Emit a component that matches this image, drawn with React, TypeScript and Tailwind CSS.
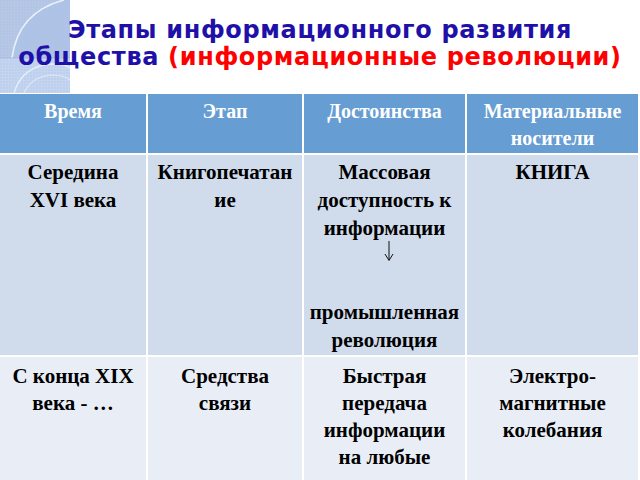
import React from "react";

const serif = { fontFamily: '"Liberation Serif", "Times New Roman", serif' };

function Logo() {
  return (
    <svg width="70" height="93" viewBox="0 0 70 93" className="absolute left-0 top-0">
      <defs>
        <pattern id="dots" width="3" height="3" patternUnits="userSpaceOnUse">
          <rect width="3" height="3" fill="#c4d5ef" />
          <circle cx="1" cy="1" r="0.7" fill="#b2c6e8" />
        </pattern>
        <pattern id="dots2" width="3" height="3" patternUnits="userSpaceOnUse">
          <rect width="3" height="3" fill="#b6c8e6" />
          <circle cx="1" cy="1" r="0.7" fill="#a9bde0" />
        </pattern>
      </defs>
      <rect x="0" y="0" width="70" height="93" fill="url(#dots)" />
      <rect x="0" y="0" width="70" height="58" fill="url(#dots2)" />
      <path d="M12 58 Q 18 12 64 0 L 70 0 L 70 58 Z" fill="#adc2e4" opacity="0.9" />
      <path d="M12 58 Q 18 12 64 0" stroke="#e8f0fb" strokeWidth="1.6" fill="none" />
      <line x1="0" y1="58" x2="70" y2="58" stroke="#9fb5dc" strokeWidth="0.8" />
      <path d="M14 93 Q 22 66 52 64 Q 66 64 70 68" stroke="#e6eefa" strokeWidth="1.4" fill="none" />
      <path d="M24 93 Q 32 76 52 75 Q 64 75 70 80" stroke="#e6eefa" strokeWidth="1.2" fill="none" opacity="0.8" />
    </svg>
  );
}

function Arrow() {
  return (
    <svg width="10" height="22" viewBox="0 0 10 22" className="mx-auto block translate-x-[4px] -translate-y-[2px]">
      <line x1="5" y1="1" x2="5" y2="20" stroke="#111" strokeWidth="1" />
      <path d="M1 14 L5 20.5 L9 14" stroke="#111" strokeWidth="1" fill="none" />
    </svg>
  );
}

export default function App() {
  return (
    <div className="relative w-[640px] h-[480px] overflow-hidden bg-white">
      <Logo />
      <div
        className="relative h-[94px] pt-[17px] text-center text-[24px] leading-[27px] font-bold text-[#1f11a8] tracking-[0.65px]"
        style={{ fontFamily: '"DejaVu Sans", Verdana, sans-serif' }}
      >
        <div>Этапы информационного развития</div>
        <div>
          общества <span className="text-[#ff0000]">(информационные революции)</span>
        </div>
      </div>
      <div
        className="grid grid-cols-[146px_154px_161px_171px_1fr] grid-rows-[59px_200px_140px] gap-[2px] bg-white text-center font-bold"
        style={serif}
      >
        <div className="bg-[#669dd3] text-white text-[20px] leading-[27px] pt-[4px]">Время</div>
        <div className="bg-[#669dd3] text-white text-[20px] leading-[27px] pt-[4px]">Этап</div>
        <div className="bg-[#669dd3] text-white text-[20px] leading-[27px] pt-[4px]">Достоинства</div>
        <div className="bg-[#669dd3] text-white text-[20px] leading-[27px] pt-[4px]">
          Материальные
          <br />
          носители
        </div>
        <div className="bg-white" />

        <div className="bg-[#d0dcec] text-black text-[21px] leading-[28px] pt-[3px]">
          Середина
          <br />
          XVI века
        </div>
        <div className="bg-[#d0dcec] text-black text-[21px] leading-[28px] pt-[3px]">
          Книгопечатан
          <br />
          ие
        </div>
        <div className="bg-[#d0dcec] text-black text-[21px] leading-[28px] pt-[3px]">
          Массовая
          <br />
          доступность к
          <br />
          информации
          <div className="h-[56px]">
            <Arrow />
          </div>
          промышленная
          <br />
          революция
        </div>
        <div className="bg-[#d0dcec] text-black text-[21px] leading-[28px] pt-[3px]">КНИГА</div>
        <div className="bg-white" />

        <div className="bg-[#e9eef6] text-black text-[21px] leading-[27px] pt-[6px]">
          С конца XIX
          <br />
          века - …
        </div>
        <div className="bg-[#e9eef6] text-black text-[21px] leading-[27px] pt-[6px]">
          Средства
          <br />
          связи
        </div>
        <div className="bg-[#e9eef6] text-black text-[21px] leading-[27px] pt-[6px]">
          Быстрая
          <br />
          передача
          <br />
          информации
          <br />
          на любые
        </div>
        <div className="bg-[#e9eef6] text-black text-[21px] leading-[27px] pt-[6px]">
          Электро-
          <br />
          магнитные
          <br />
          колебания
        </div>
        <div className="bg-white" />
      </div>
    </div>
  );
}
